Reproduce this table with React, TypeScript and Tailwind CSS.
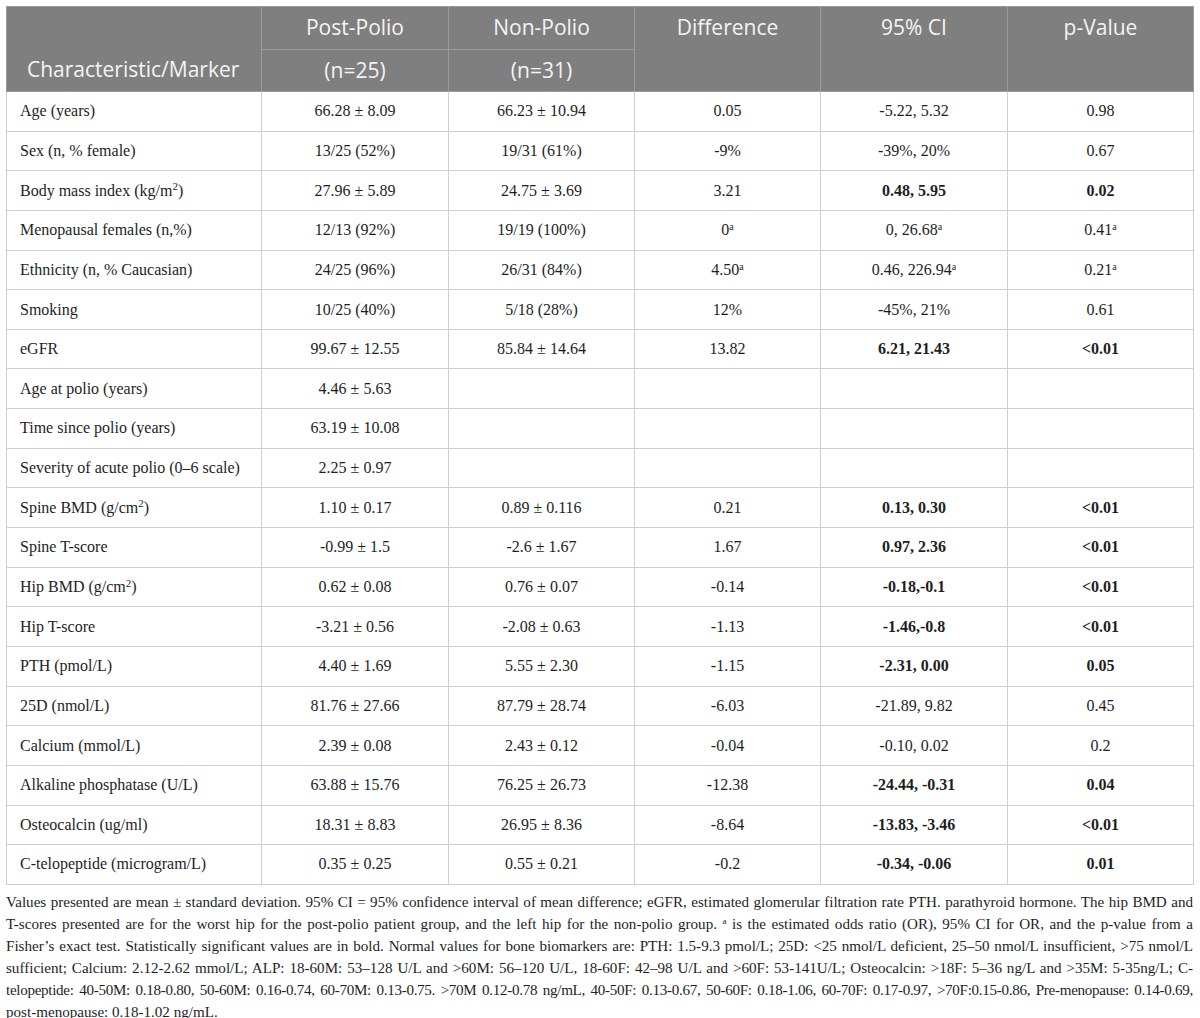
import React from 'react';

type Row = {
  label: React.ReactNode;
  post?: React.ReactNode;
  non?: React.ReactNode;
  diff?: React.ReactNode;
  ci?: React.ReactNode;
  p?: React.ReactNode;
  bold?: boolean;
};

const A = () => <sup className="text-[10px]">a</sup>;
const Sq = () => <sup className="text-[11px]">2</sup>;

const rows: Row[] = [
  { label: 'Age (years)', post: '66.28 ± 8.09', non: '66.23 ± 10.94', diff: '0.05', ci: '-5.22, 5.32', p: '0.98' },
  { label: 'Sex (n, % female)', post: '13/25 (52%)', non: '19/31 (61%)', diff: '-9%', ci: '-39%, 20%', p: '0.67' },
  { label: <>Body mass index (kg/m<Sq />)</>, post: '27.96 ± 5.89', non: '24.75 ± 3.69', diff: '3.21', ci: '0.48, 5.95', p: '0.02', bold: true },
  { label: 'Menopausal females (n,%)', post: '12/13 (92%)', non: '19/19 (100%)', diff: <>0<A /></>, ci: <>0, 26.68<A /></>, p: <>0.41<A /></> },
  { label: 'Ethnicity (n, % Caucasian)', post: '24/25 (96%)', non: '26/31 (84%)', diff: <>4.50<A /></>, ci: <>0.46, 226.94<A /></>, p: <>0.21<A /></> },
  { label: 'Smoking', post: '10/25 (40%)', non: '5/18 (28%)', diff: '12%', ci: '-45%, 21%', p: '0.61' },
  { label: 'eGFR', post: '99.67 ± 12.55', non: '85.84 ± 14.64', diff: '13.82', ci: '6.21, 21.43', p: '<0.01', bold: true },
  { label: 'Age at polio (years)', post: '4.46 ± 5.63' },
  { label: 'Time since polio (years)', post: '63.19 ± 10.08' },
  { label: 'Severity of acute polio (0–6 scale)', post: '2.25 ± 0.97' },
  { label: <>Spine BMD (g/cm<Sq />)</>, post: '1.10 ± 0.17', non: '0.89 ± 0.116', diff: '0.21', ci: '0.13, 0.30', p: '<0.01', bold: true },
  { label: 'Spine T-score', post: '-0.99 ± 1.5', non: '-2.6 ± 1.67', diff: '1.67', ci: '0.97, 2.36', p: '<0.01', bold: true },
  { label: <>Hip BMD (g/cm<Sq />)</>, post: '0.62 ± 0.08', non: '0.76 ± 0.07', diff: '-0.14', ci: '-0.18,-0.1', p: '<0.01', bold: true },
  { label: 'Hip T-score', post: '-3.21 ± 0.56', non: '-2.08 ± 0.63', diff: '-1.13', ci: '-1.46,-0.8', p: '<0.01', bold: true },
  { label: 'PTH (pmol/L)', post: '4.40 ± 1.69', non: '5.55 ± 2.30', diff: '-1.15', ci: '-2.31, 0.00', p: '0.05', bold: true },
  { label: '25D (nmol/L)', post: '81.76 ± 27.66', non: '87.79 ± 28.74', diff: '-6.03', ci: '-21.89, 9.82', p: '0.45' },
  { label: 'Calcium (mmol/L)', post: '2.39 ± 0.08', non: '2.43 ± 0.12', diff: '-0.04', ci: '-0.10, 0.02', p: '0.2' },
  { label: 'Alkaline phosphatase (U/L)', post: '63.88 ± 15.76', non: '76.25 ± 26.73', diff: '-12.38', ci: '-24.44, -0.31', p: '0.04', bold: true },
  { label: 'Osteocalcin (ug/ml)', post: '18.31 ± 8.83', non: '26.95 ± 8.36', diff: '-8.64', ci: '-13.83, -3.46', p: '<0.01', bold: true },
  { label: 'C-telopeptide (microgram/L)', post: '0.35 ± 0.25', non: '0.55 ± 0.21', diff: '-0.2', ci: '-0.34, -0.06', p: '0.01', bold: true },
];

// footnote lines, broken where the reference breaks them
const noteLine = 'text-justify [text-align-last:justify]';

export default function App() {
  const td = 'border border-[#cfcfcf] text-center align-middle';
  const th = 'border border-[#9b9b9b] font-normal text-center';

  return (
    <div className="min-h-screen bg-white pt-[6px] pl-[6px]">
      <table className="w-[1187px] table-fixed border-collapse">
        <colgroup>
          <col className="w-[255px]" />
          <col className="w-[187px]" />
          <col className="w-[186px]" />
          <col className="w-[186px]" />
          <col className="w-[187px]" />
          <col className="w-[186px]" />
        </colgroup>
        {/* Header */}
        <thead className="bg-[#7f7f7f] text-[21px] text-[#f4f4f4] font-['Open_Sans',sans-serif]">
          <tr className="h-[43px]">
            <th rowSpan={2} className={`${th} text-left align-bottom pl-[20px] pb-[6px]`}>
              Characteristic/Marker
            </th>
            <th className={`${th} align-middle`}>Post-Polio</th>
            <th className={`${th} align-middle`}>Non-Polio</th>
            <th rowSpan={2} className={`${th} align-top pt-[5px]`}>Difference</th>
            <th rowSpan={2} className={`${th} align-top pt-[5px]`}>95% CI</th>
            <th rowSpan={2} className={`${th} align-top pt-[5px]`}>p-Value</th>
          </tr>
          <tr className="h-[42px]">
            <th className={`${th} align-middle`}>(n=25)</th>
            <th className={`${th} align-middle`}>(n=31)</th>
          </tr>
        </thead>
        <tbody className="text-[16px] text-[#1e1e1e] font-['Liberation_Serif',serif]">
          {rows.map((r, i) => (
            <tr key={i} className="h-[39.65px]">
              <td className="border border-[#cfcfcf] text-left align-middle pl-[13px]">{r.label}</td>
              <td className={td}>{r.post}</td>
              <td className={td}>{r.non}</td>
              <td className={td}>{r.diff}</td>
              <td className={`${td} ${r.bold ? 'font-bold' : ''}`}>{r.ci}</td>
              <td className={`${td} ${r.bold ? 'font-bold' : ''}`}>{r.p}</td>
            </tr>
          ))}
        </tbody>
      </table>

      {/* Footnote */}
      <div className="w-[1187px] mt-[6px] text-[15.1px] leading-[22px] text-[#1e1e1e] font-['Liberation_Serif',serif]">
        <div className={noteLine}>
          Values presented are mean ± standard deviation. 95% CI = 95% confidence interval of mean difference; eGFR, estimated glomerular filtration rate PTH. parathyroid hormone. The hip BMD and
        </div>
        <div className={noteLine}>
          T-scores presented are for the worst hip for the post-polio patient group, and the left hip for the non-polio group. <span className="relative -top-[5px] text-[9px] leading-none">a</span> is the estimated odds ratio (OR), 95% CI for OR, and the p-value from a
        </div>
        <div className={noteLine}>
          Fisher’s exact test. Statistically significant values are in bold. Normal values for bone biomarkers are: PTH: 1.5-9.3 pmol/L; 25D: &lt;25 nmol/L deficient, 25–50 nmol/L insufficient, &gt;75 nmol/L
        </div>
        <div className={noteLine}>
          sufficient; Calcium: 2.12-2.62 mmol/L; ALP: 18-60M: 53–128 U/L and &gt;60M: 56–120 U/L, 18-60F: 42–98 U/L and &gt;60F: 53-141U/L; Osteocalcin: &gt;18F: 5–36 ng/L and &gt;35M: 5-35ng/L; C-
        </div>
        <div className={`${noteLine} tracking-[-0.3px] [word-spacing:-1px]`}>
          telopeptide: 40-50M: 0.18-0.80, 50-60M: 0.16-0.74, 60-70M: 0.13-0.75. &gt;70M 0.12-0.78 ng/mL, 40-50F: 0.13-0.67, 50-60F: 0.18-1.06, 60-70F: 0.17-0.97, &gt;70F:0.15-0.86, Pre-menopause: 0.14-0.69,
        </div>
        <div>post-menopause: 0.18-1.02 ng/mL.</div>
      </div>
    </div>
  );
}
